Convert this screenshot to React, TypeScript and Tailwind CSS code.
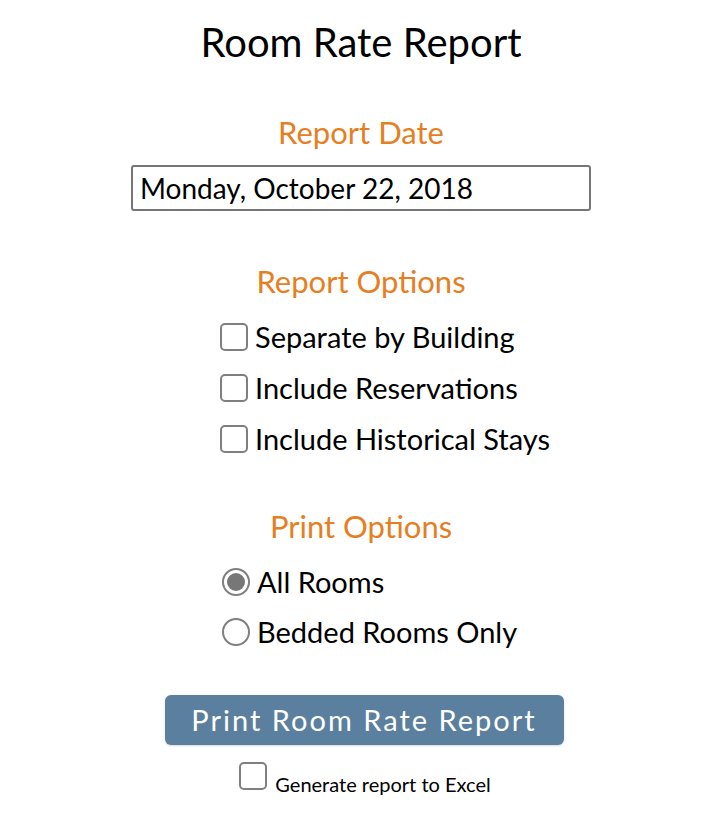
import { useState } from "react";

const font = { fontFamily: "Lato, 'Open Sans', sans-serif" };

function Box({ checked, onClick }: { checked: boolean; onClick: () => void }) {
  return (
    <span
      onClick={onClick}
      className="inline-block w-[28px] h-[28px] shrink-0 rounded-[5px] border-2 border-[#7f7f7f] bg-white"
    >
      {checked && (
        <svg viewBox="0 0 24 24" className="w-full h-full text-[#555]">
          <path d="M5 12l5 5 9-10" fill="none" stroke="currentColor" strokeWidth="3" />
        </svg>
      )}
    </span>
  );
}

function Radio({ selected, onClick }: { selected: boolean; onClick: () => void }) {
  return (
    <span
      onClick={onClick}
      className="ml-[2px] flex items-center justify-center w-[28px] h-[28px] shrink-0 rounded-full border-2 border-[#7f7f7f] bg-white"
    >
      {selected && <span className="w-[18px] h-[18px] rounded-full bg-[#777777]" />}
    </span>
  );
}

export default function App() {
  const [opts, setOpts] = useState({ building: false, reservations: false, historical: false });
  const [print, setPrint] = useState("all");
  const [excel, setExcel] = useState(false);

  const options: { key: keyof typeof opts; label: string }[] = [
    { key: "building", label: "Separate by Building" },
    { key: "reservations", label: "Include Reservations" },
    { key: "historical", label: "Include Historical Stays" },
  ];

  return (
    <div className="flex flex-col items-center bg-white text-black min-h-screen" style={font}>
      <h1 className="mt-[16px] text-[40px] leading-[52px]">Room Rate Report</h1>

      {/* date */}
      <h2 className="mt-[44px] text-[31px] leading-[40px] text-[#e67e22]">Report Date</h2>
      <div className="mt-[13px] w-[460px] h-[46px] rounded-[3px] border-2 border-[#767676] px-[7px] flex items-center text-[28px]">
        Monday, October 22, 2018
      </div>

      {/* checkboxes */}
      <h2 className="mt-[50px] text-[31px] leading-[40px] text-[#e67e22]">Report Options</h2>
      <div className="mt-[18px] w-[282px] flex flex-col gap-[15px] whitespace-nowrap">
        {options.map((o) => (
          <label key={o.key} className="flex items-center gap-[7px] text-[29px] leading-[36px]">
            <Box checked={opts[o.key]} onClick={() => setOpts({ ...opts, [o.key]: !opts[o.key] })} />
            {o.label}
          </label>
        ))}
      </div>

      {/* print mode */}
      <h2 className="mt-[49px] text-[31px] leading-[40px] text-[#e67e22]">Print Options</h2>
      <div className="mt-[18px] w-[282px] flex flex-col gap-[14px] whitespace-nowrap">
        <label className="flex items-center gap-[7px] text-[29px] leading-[36px]">
          <Radio selected={print === "all"} onClick={() => setPrint("all")} />
          All Rooms
        </label>
        <label className="flex items-center gap-[7px] text-[29px] leading-[36px]">
          <Radio selected={print === "bedded"} onClick={() => setPrint("bedded")} />
          Bedded Rooms Only
        </label>
      </div>

      <button className="mt-[45px] ml-[6px] w-[399px] h-[50px] rounded-[6px] bg-[#5b7f9e] text-white text-[29px] tracking-[2px] shadow-[0_1px_2px_rgba(0,0,0,0.15)]">
        Print Room Rate Report
      </button>

      <label className="mt-[17px] ml-[8px] flex items-start gap-[8px] text-[20px]">
        <Box checked={excel} onClick={() => setExcel(!excel)} />
        <span className="mt-[7px]">Generate report to Excel</span>
      </label>
    </div>
  );
}
